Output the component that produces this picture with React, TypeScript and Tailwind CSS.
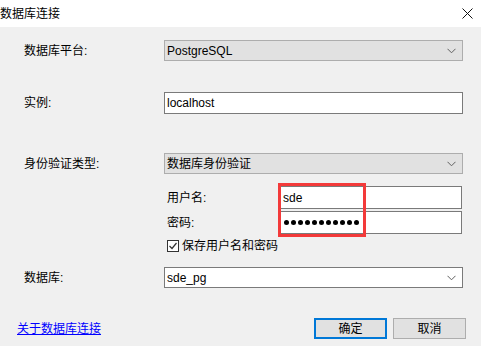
import React from "react";

const font = { fontFamily: '"Liberation Sans", "Noto Sans CJK SC", sans-serif' };

function Chevron() {
  return (
    <svg width="9" height="6" viewBox="0 0 9 6" className="shrink-0">
      <path d="M0.5 0.8 L4.5 4.8 L8.5 0.8" fill="none" stroke="#606060" strokeWidth="1" />
    </svg>
  );
}

function Combo({ value, white }: { value: string; white?: boolean }) {
  return (
    <div
      className={`flex h-[21px] w-[299px] items-center justify-between border pl-[2px] pr-[6px] text-[12px] leading-none text-black ${
        white ? "border-[#7a7a7a] bg-white" : "border-[#adadad] bg-[#e1e1e1]"
      }`}
    >
      <span>{value}</span>
      <Chevron />
    </div>
  );
}

function Row({ label, children, className }: { label: string; children: React.ReactNode; className?: string }) {
  return (
    <div className={`flex items-center ${className ?? ""}`}>
      <span className="w-[164px] shrink-0 pl-[24px] text-[12px] leading-none">{label}</span>
      {children}
    </div>
  );
}

export default function App() {
  return (
    <div className="h-[346px] w-[481px] overflow-hidden bg-[#f0f0f0] text-black" style={font}>
      <div className="flex h-[27px] items-center justify-between bg-white pr-[8px]">
        <span className="text-[12px] leading-none">数据库连接</span>
        <svg width="11" height="11" viewBox="0 0 11 11">
          <path d="M0.5 0.5 L10.5 10.5 M10.5 0.5 L0.5 10.5" stroke="#111" strokeWidth="1" />
        </svg>
      </div>

      <div className="flex flex-col">
        <Row label="数据库平台:" className="mt-[13px]">
          <Combo value="PostgreSQL" />
        </Row>

        <Row label="实例:" className="mt-[31px]">
          <div className="flex h-[22px] w-[299px] items-center border border-[#7a7a7a] bg-white pl-[2px] text-[12px] leading-none">
            localhost
          </div>
        </Row>

        <Row label="身份验证类型:" className="mt-[39px]">
          <Combo value="数据库身份验证" />
        </Row>

        <div className="ml-[167px] mt-[12px] flex flex-col">
          <div className="relative flex flex-col gap-[2px]">
            <div className="flex items-center">
              <span className="w-[113px] shrink-0 text-[12px] leading-none">用户名:</span>
              <div className="flex h-[23px] w-[182px] items-center border border-[#7a7a7a] bg-white pl-[2px] text-[12px] leading-none">
                sde
              </div>
            </div>
            <div className="flex items-center">
              <span className="w-[113px] shrink-0 text-[12px] leading-none">密码:</span>
              <div className="flex h-[23px] w-[182px] items-center gap-[2px] border border-[#7a7a7a] bg-white pl-[3px]">
                {Array.from({ length: 11 }).map((_, i) => (
                  <span key={i} className="h-[5px] w-[5px] rounded-full bg-black" />
                ))}
              </div>
            </div>
            <div className="absolute left-[111px] top-[-3px] h-[54px] w-[88px] border-[3px] border-[#f33a3a]" />
          </div>

          <label className="mt-[6px] flex items-center gap-[3px] text-[12px] leading-none">
            <span className="flex h-[12px] w-[12px] items-center justify-center border border-[#333] bg-white">
              <svg width="10" height="10" viewBox="0 0 10 10">
                <path d="M1.5 5 L4 7.5 L8.5 2" fill="none" stroke="#333" strokeWidth="1.2" />
              </svg>
            </span>
            保存用户名和密码
          </label>
        </div>

        <Row label="数据库:" className="mt-[15px]">
          <Combo value="sde_pg" white />
        </Row>

        <div className="mt-[30px] flex items-center justify-between pl-[17px] pr-[15px]">
          <a className="text-[12px] leading-none text-[#0000ff] underline">关于数据库连接</a>
          <div className="flex gap-[6px]">
            <button className="h-[21px] w-[73px] border-2 border-[#0078d7] bg-[#e1e1e1] text-[12px] leading-none">
              确定
            </button>
            <button className="h-[21px] w-[73px] border border-[#adadad] bg-[#e1e1e1] text-[12px] leading-none">
              取消
            </button>
          </div>
        </div>
      </div>
    </div>
  );
}
